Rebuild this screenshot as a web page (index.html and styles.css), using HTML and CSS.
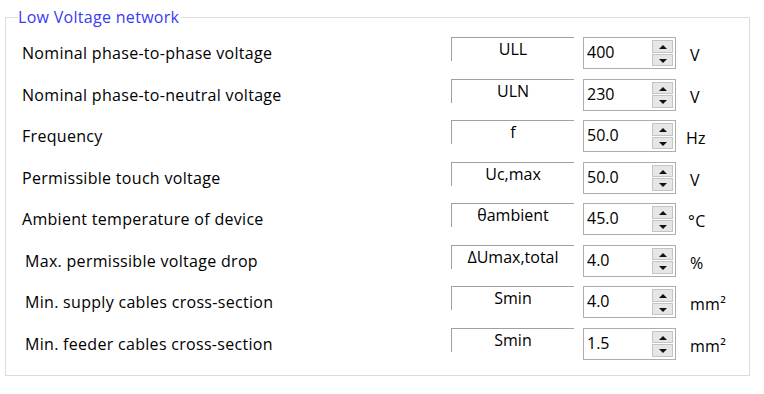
FILE: index.html
```html
<!DOCTYPE html>
<html lang="en">
<head>
	<meta charset="UTF-8">
	<title>Low Voltage network</title>
	<link rel="stylesheet" href="styles.css">
</head>
<body>
	<fieldset class="group">
		<legend>Low Voltage network</legend>
		<div class="rows">
			<div class="caption">Nominal phase-to-phase voltage</div>
			<div class="symbol">ULL</div>
			<div class="spin"><span class="value">400</span><div class="arrows"><b class="up"></b><b class="down"></b></div></div>
			<div class="unit">V</div>

			<div class="caption">Nominal phase-to-neutral voltage</div>
			<div class="symbol">ULN</div>
			<div class="spin"><span class="value">230</span><div class="arrows"><b class="up"></b><b class="down"></b></div></div>
			<div class="unit">V</div>

			<div class="caption">Frequency</div>
			<div class="symbol">f</div>
			<div class="spin"><span class="value">50.0</span><div class="arrows"><b class="up"></b><b class="down"></b></div></div>
			<div class="unit hz">Hz</div>

			<div class="caption">Permissible touch voltage</div>
			<div class="symbol">Uc,max</div>
			<div class="spin"><span class="value">50.0</span><div class="arrows"><b class="up"></b><b class="down"></b></div></div>
			<div class="unit">V</div>

			<div class="caption">Ambient temperature of device</div>
			<div class="symbol">θambient</div>
			<div class="spin"><span class="value">45.0</span><div class="arrows"><b class="up"></b><b class="down"></b></div></div>
			<div class="unit deg">°C</div>

			<div class="caption indent">Max. permissible voltage drop</div>
			<div class="symbol">ΔUmax,total</div>
			<div class="spin"><span class="value">4.0</span><div class="arrows"><b class="up"></b><b class="down"></b></div></div>
			<div class="unit">%</div>

			<div class="caption indent">Min. supply cables cross-section</div>
			<div class="symbol">Smin</div>
			<div class="spin"><span class="value">4.0</span><div class="arrows"><b class="up"></b><b class="down"></b></div></div>
			<div class="unit">mm²</div>

			<div class="caption indent">Min. feeder cables cross-section</div>
			<div class="symbol">Smin</div>
			<div class="spin"><span class="value">1.5</span><div class="arrows"><b class="up"></b><b class="down"></b></div></div>
			<div class="unit">mm²</div>
		</div>
	</fieldset>
</body>
</html>
```

FILE: styles.css
```css
	/*--reset--*/
	body {
		margin: 0;
		background: #fff;
		font-family: "Open Sans", "Noto Sans", sans-serif;
		font-size: 16px;
		letter-spacing: 0.3px;
		color: #000;
	}

	/**
	 * group box
	 */
	fieldset.group {
		margin: 7px 0 0 5px;
		width: 745px;
		height: 369px;
		box-sizing: border-box;
		border: 1px solid #dcdcdc;
		padding: 0 0 0 16px;
	}
	fieldset.group legend {
		color: #3a3af2;
		font-size: 16px;
		letter-spacing: 0.3px;
		line-height: 20px;
		padding: 0 2px 0 0;
		margin-left: -4px;
	}

	.rows {
		display: grid;
		grid-template-columns: 420px 123px 93px auto;
		grid-auto-rows: 32px;
		row-gap: 9.57px;
		column-gap: 9px;
		align-items: center;
		margin-top: 10px;
	}
	.caption {
		white-space: nowrap;
	}
	.caption.indent {
		padding-left: 3px;
	}

	/* sunken label box */
	.symbol {
		align-self: start;
		height: 24px;
		box-sizing: border-box;
		border-top: 1px solid #a0a0a0;
		border-left: 1px solid #a0a0a0;
		text-align: center;
		line-height: 22px;
		letter-spacing: 0;
	}

	/* numeric spinner */
	.spin {
		height: 32px;
		box-sizing: border-box;
		border: 1px solid #adadad;
		display: flex;
		justify-content: space-between;
		padding: 2px;
	}
	.spin .value {
		line-height: 24px;
		padding-left: 1px;
		letter-spacing: 0;
	}
	.arrows {
		display: flex;
		flex-direction: column;
		gap: 1px;
		width: 21px;
	}
	.arrows b {
		flex: 1;
		background: #e6e6e6;
		border: 1px solid #c4c4c4;
		position: relative;
	}
	.arrows b::after {
		content: "";
		position: absolute;
		left: 6px;
		top: 4px;
		border-left: 4px solid transparent;
		border-right: 4px solid transparent;
	}
	.arrows b.up::after {
		border-bottom: 4px solid #111;
	}
	.arrows b.down::after {
		border-top: 4px solid #111;
	}

	.unit {
		padding-left: 5px;
		padding-top: 4px;
	}
	.unit.hz {
		padding-left: 1px;
	}
	.unit.deg {
		padding-left: 3px;
	}
```
